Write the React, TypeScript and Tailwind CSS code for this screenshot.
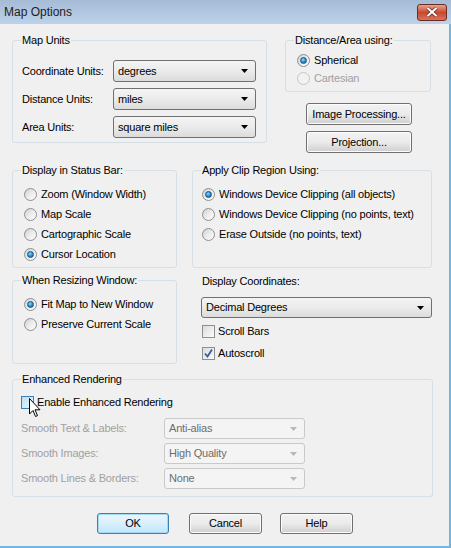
import type { ReactNode } from "react";

const font = { fontFamily: '"Liberation Sans", Arial, sans-serif' };

const GroupBox = ({
  title,
  className,
  children,
}: {
  title: string;
  className: string;
  children: ReactNode;
}) => (
  <fieldset className={`border border-[#d5dfe5] rounded-[3px] ${className}`}>
    <legend className="ml-[8px] px-[1px] leading-[13px]">{title}</legend>
    {children}
  </fieldset>
);

const Radio = ({
  label,
  checked,
  disabled,
}: {
  label: string;
  checked?: boolean;
  disabled?: boolean;
}) => (
  <div className={`flex items-center h-[13px] ${disabled ? "text-[#a0a0a0]" : ""}`}>
    <div
      className={`w-[13px] h-[13px] rounded-full border flex items-center justify-center shrink-0 ${
        disabled
          ? "border-[#c6c6c6] bg-[#f2f2f2]"
          : "border-[#8e8f8f] bg-gradient-to-br from-[#d0d0d0] via-[#ececec] to-[#fdfdfd]"
      }`}
    >
      {checked && (
        <div className="w-[7px] h-[7px] rounded-full bg-[radial-gradient(circle_at_40%_35%,#a4dcff_0%,#3a9ee0_40%,#0a4f8c_100%)] border border-[#1c5180]" />
      )}
    </div>
    <span className="ml-[4px]">{label}</span>
  </div>
);

const Check = ({
  label,
  checked,
  hover,
}: {
  label: string;
  checked?: boolean;
  hover?: boolean;
}) => (
  <div className="flex items-center h-[13px]">
    <div
      className={`w-[13px] h-[13px] border flex items-center justify-center shrink-0 ${
        hover
          ? "border-[#3c7fb1] bg-gradient-to-br from-[#b9e0f7] to-[#e8f6fd]"
          : "border-[#8e8f8f] bg-gradient-to-br from-[#dcdcdc] to-[#fbfbfb]"
      }`}
    >
      {checked && (
        <svg width="9" height="9" viewBox="0 0 9 9">
          <path d="M1 4.5 L3.5 7.5 L8 0.5" fill="none" stroke="#3a5aa0" strokeWidth="1.8" />
        </svg>
      )}
    </div>
    <span className="ml-[3px]">{label}</span>
  </div>
);

const Arrow = ({ color }: { color: string }) => (
  <svg width="7" height="4" viewBox="0 0 7 4">
    <path d="M0 0 H7 L3.5 4 Z" fill={color} />
  </svg>
);

const Select = ({
  value,
  className,
  disabled,
}: {
  value: string;
  className: string;
  disabled?: boolean;
}) => (
  <div
    className={`flex items-center justify-between border rounded-[3px] pl-[4px] pr-[7px] ${
      disabled
        ? "border-[#c9c9c9] bg-[#f4f4f4] text-[#6d6d6d]"
        : "border-[#707070] bg-gradient-to-b from-[#f4f4f4] via-[#ebebeb] to-[#dcdcdc]"
    } ${className}`}
  >
    <span>{value}</span>
    <Arrow color={disabled ? "#b8b8b8" : "#000"} />
  </div>
);

const Button = ({
  label,
  className,
  isDefault,
}: {
  label: string;
  className: string;
  isDefault?: boolean;
}) => (
  <div
    className={`flex items-center justify-center rounded-[3px] border ${
      isDefault
        ? "border-[#3c7fb1] bg-gradient-to-b from-[#eaf6fd] via-[#d9f0fc] to-[#bee6fd] shadow-[inset_0_0_0_1px_#a7d9f5]"
        : "border-[#707070] bg-gradient-to-b from-[#f2f2f2] via-[#ebebeb] to-[#cfcfcf] shadow-[inset_0_0_0_1px_#fcfcfc]"
    } ${className}`}
  >
    {label}
  </div>
);

const Cursor = () => (
  <svg
    className="absolute left-[29px] top-[398px]"
    width="12"
    height="20"
    viewBox="0 0 12 20"
  >
    <path
      d="M0.5 0.5 V16 L4 12.5 L6.5 18.5 L8.5 17.6 L6 11.8 H11 Z"
      fill="#fff"
      stroke="#000"
      strokeWidth="1"
      strokeLinejoin="round"
    />
  </svg>
);

export default function App() {
  return (
    <div
      className="relative w-[451px] h-[548px] flex flex-col text-[11px] tracking-[-0.2px] text-black bg-[#f0f0f0]"
      style={font}
    >
      {/* title bar */}
      <div className="h-[24px] shrink-0 flex items-center justify-between pl-[4px] pr-[4px] bg-gradient-to-b from-[#a5bbd6] to-[#bdd2ea]">
        <span className="text-[12px] tracking-normal text-[#1e1e1e]">Map Options</span>
        <div className="w-[30px] h-[17px] rounded-[3px] border border-[#6b2c22] bg-gradient-to-b from-[#e8a191] via-[#c8482f] to-[#d9725c] flex items-center justify-center">
          <svg width="12" height="10" viewBox="0 0 12 10">
            <path d="M1.5 1 L10.5 9 M10.5 1 L1.5 9" stroke="#5a2a22" strokeWidth="3.4" />
            <path d="M1.5 1 L10.5 9 M10.5 1 L1.5 9" stroke="#fff" strokeWidth="2" />
          </svg>
        </div>
      </div>

      {/* body */}
      <div className="flex-1 flex flex-col pl-[12px] border-r-2 border-b-2 border-[#72b4e2]">
        <div className="flex items-start mt-[10px]">
          <GroupBox title="Map Units" className="w-[255px] h-[109px]">
            <div className="flex flex-col gap-[6px] mt-[13px] pl-[9px]">
              {[
                ["Coordinate Units:", "degrees"],
                ["Distance Units:", "miles"],
                ["Area Units:", "square miles"],
              ].map(([label, value]) => (
                <div key={label} className="flex items-center">
                  <span className="w-[91px]">{label}</span>
                  <Select value={value} className="w-[143px] h-[22px]" />
                </div>
              ))}
            </div>
          </GroupBox>

          <div className="flex flex-col ml-[18px]">
            <GroupBox title="Distance/Area using:" className="w-[146px] h-[58px]">
              <div className="flex flex-col gap-[5px] mt-[7px] pl-[11px]">
                <Radio label="Spherical" checked />
                <Radio label="Cartesian" disabled />
              </div>
            </GroupBox>
            <Button label="Image Processing..." className="w-[106px] h-[22px] ml-[21px] mt-[11px]" />
            <Button label="Projection..." className="w-[106px] h-[22px] ml-[21px] mt-[6px]" />
          </div>
        </div>

        <div className="flex mt-[11px]">
          <GroupBox title="Display in Status Bar:" className="w-[165px] h-[104px]">
            <div className="flex flex-col gap-[7px] mt-[11px] pl-[11px]">
              <Radio label="Zoom (Window Width)" />
              <Radio label="Map Scale" />
              <Radio label="Cartographic Scale" />
              <Radio label="Cursor Location" checked />
            </div>
          </GroupBox>
          <GroupBox title="Apply Clip Region Using:" className="w-[240px] h-[104px] ml-[15px]">
            <div className="flex flex-col gap-[7px] mt-[11px] pl-[9px]">
              <Radio label="Windows Device Clipping (all objects)" checked />
              <Radio label="Windows Device Clipping (no points, text)" />
              <Radio label="Erase Outside (no points, text)" />
            </div>
          </GroupBox>
        </div>

        <div className="flex mt-[6px]">
          <GroupBox title="When Resizing Window:" className="w-[165px] h-[90px]">
            <div className="flex flex-col gap-[7px] mt-[11px] pl-[11px]">
              <Radio label="Fit Map to New Window" checked />
              <Radio label="Preserve Current Scale" />
            </div>
          </GroupBox>
          <div className="flex flex-col ml-[24px]">
            <span className="leading-[13px] mt-[1px] ml-[1px]">Display Coordinates:</span>
            <Select value="Decimal Degrees" className="w-[231px] h-[21px] mt-[9px]" />
            <div className="mt-[7px] ml-[1px]">
              <Check label="Scroll Bars" />
            </div>
            <div className="mt-[9px] ml-[1px]">
              <Check label="Autoscroll" checked />
            </div>
          </div>
        </div>

        <GroupBox title="Enhanced Rendering" className="w-[421px] h-[124px] mt-[9px]">
          <div className="pl-[8px] mt-[10px]">
            <Check label="Enable Enhanced Rendering" hover />
          </div>
          <div className="flex flex-col gap-[4px] mt-[9px] pl-[8px] text-[#a0a0a0]">
            {[
              ["Smooth Text & Labels:", "Anti-alias"],
              ["Smooth Images:", "High Quality"],
              ["Smooth Lines & Borders:", "None"],
            ].map(([label, value]) => (
              <div key={label} className="flex items-center">
                <span className="w-[143px]">{label}</span>
                <Select value={value} className="w-[141px] h-[21px]" disabled />
              </div>
            ))}
          </div>
        </GroupBox>

        <div className="flex mt-[16px] ml-[85px]">
          <Button label="OK" className="w-[72px] h-[21px]" isDefault />
          <Button label="Cancel" className="w-[73px] h-[21px] ml-[20px]" />
          <Button label="Help" className="w-[73px] h-[21px] ml-[18px]" />
        </div>
      </div>

      <Cursor />
    </div>
  );
}
